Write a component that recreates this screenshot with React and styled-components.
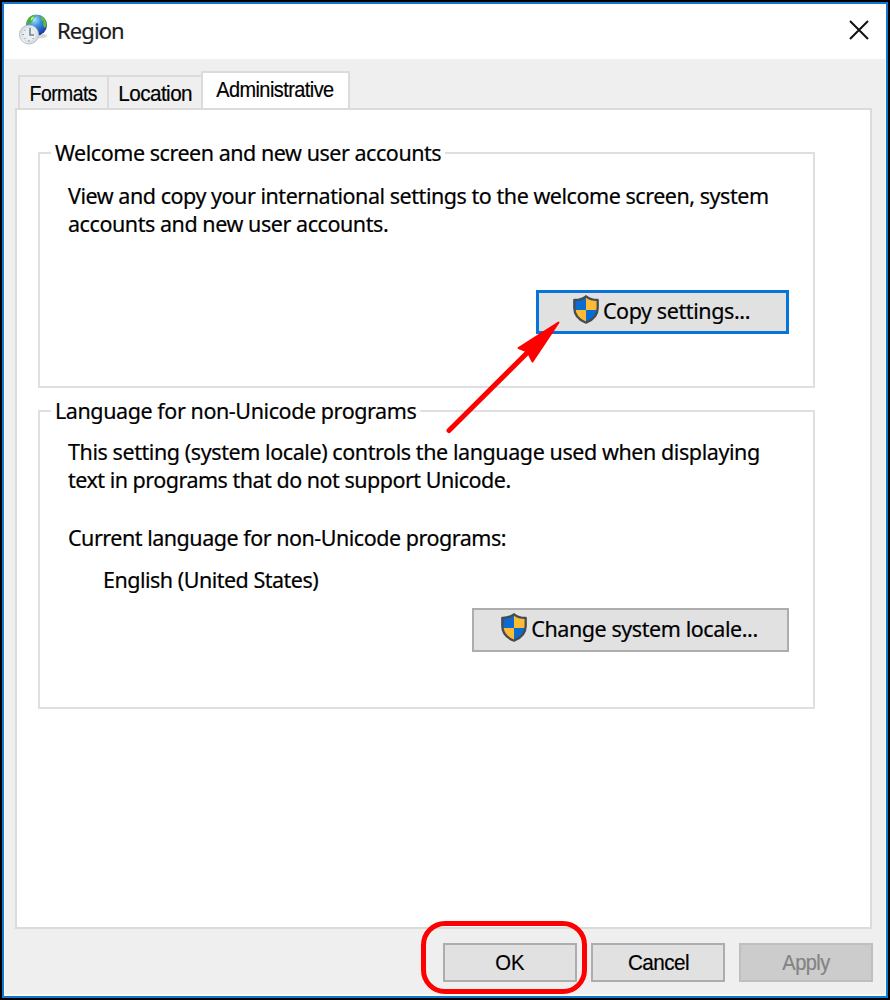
import styled, { createGlobalStyle } from 'styled-components';

const GlobalStyle = createGlobalStyle`
  * {
    box-sizing: border-box;
  }

  body {
    margin: 0;
    background: #000;
    overflow: hidden;
  }
`;

const Screen = styled.div`
  position: relative;
  width: 890px;
  height: 1000px;
  padding: 2px;
  background: #000;
  color: #000;
  font-family: 'Noto Sans', 'Open Sans', sans-serif;
  font-size: 21.5px;
`;

const Dialog = styled.div`
  display: flex;
  flex-direction: column;
  width: 100%;
  height: 100%;
  border: 2px solid #0f78d0;
  background: #efefef;
`;

const TitleBar = styled.header`
  display: flex;
  align-items: center;
  height: 55px;
  padding: 0 17px 4px 15px;
  background: #fff;
`;

const Title = styled.h1`
  flex: 1;
  margin: 0 0 0 9px;
  font-size: 22px;
  font-weight: 400;
  line-height: 30px;
  color: #1c1c1c;
`;

const CloseButton = styled.button`
  display: flex;
  padding: 0;
  border: 0;
  background: none;
`;

const Body = styled.main`
  display: flex;
  flex-direction: column;
  flex: 1;
  padding: 12px 0 0 10px;
  border: solid #fbfaf0;
  border-width: 0 1px 2px 1px;
`;

const TabList = styled.div`
  display: flex;
  align-items: flex-end;
  height: 39px;
  margin-bottom: -2px;
  padding-left: 3px;
`;

const Text = styled.span`
  display: inline-block;
  white-space: nowrap;
  letter-spacing: ${(props) => props.$tracking || 0}px;
  transform: scaleX(${(props) => props.$stretch || 1});
  -webkit-text-stroke: 0.2px currentColor;
`;

const Tab = styled.button`
  width: ${(props) => props.$width}px;
  height: ${(props) => (props.$active ? 39 : 35)}px;
  padding: ${(props) => (props.$active ? '0 2px 1px 0' : '2px 0 0')};
  margin-left: ${(props) => (props.$joined ? -2 : 0)}px;
  border: 2px solid #dbdbdb;
  border-bottom-color: ${(props) => (props.$active ? '#fff' : '#dbdbdb')};
  background: ${(props) => (props.$active ? '#fff' : '#efefef')};
  font-family: 'Liberation Sans', Arial, sans-serif;
  font-size: 22px;
  line-height: 26px;
  color: #000;
`;

const Panel = styled.section`
  display: flex;
  flex-direction: column;
  gap: 10px;
  width: 857px;
  height: 821px;
  padding: 30px 21px 0;
  border: 2px solid #dbdbdb;
  background: #fff;
`;

const Group = styled.fieldset`
  display: flex;
  flex-direction: column;
  width: 777px;
  height: ${(props) => props.$height}px;
  margin: 0;
  padding: ${(props) => props.$top}px 24px 0 28px;
  border: 2px solid #dfdfdf;
`;

const Legend = styled.legend`
  height: 26px;
  margin-left: -17px;
  padding: 0 4px;
  line-height: 26px;
`;

const Line = styled.div`
  height: 28px;
  line-height: 28px;
  margin-top: ${(props) => props.$gap || 0}px;
  padding-left: ${(props) => props.$indent || 0}px;
`;

const ActionButton = styled.button`
  display: flex;
  align-items: center;
  justify-content: center;
  align-self: flex-end;
  gap: 4px;
  width: ${(props) => props.$width}px;
  height: 44px;
  margin-top: ${(props) => props.$gap}px;
  padding: 0 2px 4px 0;
  border: ${(props) => (props.$focused ? '3px solid #0874d9' : '2px solid #adadad')};
  background: #e1e1e1;
  font: inherit;
  color: #000;

  svg {
    margin-bottom: 2px;
  }
`;

const Footer = styled.footer`
  display: flex;
  gap: 14px;
  justify-content: flex-end;
  padding: 14px 12px 0 0;
`;

const FooterButton = styled.button`
  width: 134px;
  height: 39px;
  padding: 0;
  border: 2px solid #adadad;
  background: #e1e1e1;
  font-family: 'Liberation Sans', Arial, sans-serif;
  font-size: 22px;
  color: #000;

  &:disabled {
    border-color: #bfbfbf;
    background: #cccccc;
    color: #838383;
  }
`;

const Highlight = styled.div`
  position: absolute;
  left: 421px;
  top: 921px;
  width: 166px;
  height: 73px;
  border: 5.5px solid #f00;
  border-radius: 24px;
`;

const Arrow = styled.svg`
  position: absolute;
  left: 440px;
  top: 312px;
`;

function RegionIcon() {
  return (
    <svg width="29" height="31" viewBox="0 0 29 31">
      <defs>
        <radialGradient id="ocean" cx="0.4" cy="0.25" r="0.8">
          <stop offset="0" stopColor="#a9e4fb" />
          <stop offset="0.4" stopColor="#3b8ee0" />
          <stop offset="1" stopColor="#142f9c" />
        </radialGradient>
        <linearGradient id="dial" x1="0" y1="0" x2="1" y2="1">
          <stop offset="0" stopColor="#cbd3d8" />
          <stop offset="0.5" stopColor="#f3f7f9" />
          <stop offset="1" stopColor="#c9d2d8" />
        </linearGradient>
      </defs>
      <ellipse cx="19" cy="22" rx="9" ry="2.5" fill="#c8c8c8" opacity="0.7" />
      <circle cx="17.5" cy="11" r="10.5" fill="url(#ocean)" />
      <path d="M7.5 10C8 5 11 1.5 15 1L17 2L14 5L13 8L10 10Z" fill="#4fae35" />
      <path d="M22 2C26 4 28 8 27.5 12L25.5 14L24 11L24.5 8L21.5 5Z" fill="#64bb32" />
      <path d="M12 4L15 2L14.5 4L12 7Z" fill="#c5ef8f" />
      <circle cx="10" cy="20.5" r="9.5" fill="url(#dial)" stroke="#b4bcc1" />
      <circle cx="10" cy="20.5" r="7.2" fill="#e9eff3" stroke="#d1d9de" />
      <path d="M11 14V21H15" fill="none" stroke="#6f8190" strokeWidth="1.5" />
      <path d="M10 26V27.5M3.5 20.5H5M5.5 16L6.5 17M5.5 25L6.5 24M14.5 25L13.5 24" stroke="#7d8c98" />
    </svg>
  );
}

function Shield() {
  return (
    <svg width="26" height="29" viewBox="0 0 26 29">
      <path d="M13 1.3C10 3.6 5.5 5 1.3 4.9V13C1.3 20 6 25 13 27.7C20 25 24.7 20 24.7 13V4.9C20.5 5 16 3.6 13 1.3Z" fill="#0a6bd0" />
      <path d="M13 1.3C16 3.6 20.5 5 24.7 4.9V15H13ZM1.6 15H13V27.7C6.5 25 2.5 21 1.6 15Z" fill="#fdbb35" />
      <path d="M13 1.3C10 3.6 5.5 5 1.3 4.9V13C1.3 20 6 25 13 27.7C20 25 24.7 20 24.7 13V4.9C20.5 5 16 3.6 13 1.3Z" fill="none" stroke="#454b50" strokeWidth="2.3" strokeLinejoin="round" />
    </svg>
  );
}

export default function App() {
  return (
    <Screen>
      <GlobalStyle />
      <Dialog>
        <TitleBar>
          <RegionIcon />
          <Title>
            <Text $tracking={-0.9}>Region</Text>
          </Title>
          <CloseButton aria-label="Close">
            <svg width="20" height="20" viewBox="0 0 20 20">
              <path d="M1 1L19 19M19 1L1 19" stroke="#111" strokeWidth="2" />
            </svg>
          </CloseButton>
        </TitleBar>
        <Body>
          <TabList>
            <Tab $width={91}>
              <Text $tracking={-0.6} $stretch={0.88}>Formats</Text>
            </Tab>
            <Tab $width={96} $joined>
              <Text $tracking={-0.6} $stretch={0.94}>Location</Text>
            </Tab>
            <Tab $width={149} $active $joined>
              <Text $tracking={-0.6} $stretch={0.905}>Administrative</Text>
            </Tab>
          </TabList>
          <Panel>
            <Group $height={248} $top={16}>
              <Legend>
                <Text $tracking={-0.46}>Welcome screen and new user accounts</Text>
              </Legend>
              <Line>
                <Text $tracking={-0.46}>View and copy your international settings to the welcome screen, system</Text>
              </Line>
              <Line>
                <Text $tracking={-0.44}>accounts and new user accounts.</Text>
              </Line>
              <ActionButton $width={253} $gap={52} $focused>
                <Shield />
                <Text $tracking={-0.4}>Copy settings...</Text>
              </ActionButton>
            </Group>
            <Group $height={311} $top={14}>
              <Legend>
                <Text $tracking={-0.42}>Language for non-Unicode programs</Text>
              </Legend>
              <Line>
                <Text $tracking={-0.42}>This setting (system locale) controls the language used when displaying</Text>
              </Line>
              <Line>
                <Text $tracking={-0.5}>text in programs that do not support Unicode.</Text>
              </Line>
              <Line $gap={30}>
                <Text $tracking={-0.48}>Current language for non-Unicode programs:</Text>
              </Line>
              <Line $gap={14} $indent={35}>
                <Text $tracking={-0.5}>English (United States)</Text>
              </Line>
              <ActionButton $width={317} $gap={14}>
                <Shield />
                <Text $tracking={-0.42}>Change system locale...</Text>
              </ActionButton>
            </Group>
          </Panel>
          <Footer>
            <FooterButton>
              <Text $stretch={0.92}>OK</Text>
            </FooterButton>
            <FooterButton>
              <Text $tracking={-0.6} $stretch={0.94}>Cancel</Text>
            </FooterButton>
            <FooterButton disabled>
              <Text $tracking={-0.6} $stretch={0.91}>Apply</Text>
            </FooterButton>
          </Footer>
        </Body>
      </Dialog>
      <Arrow width="124" height="124" viewBox="440 312 124 124">
        <path d="M449 430.5L530 350" stroke="#f00" strokeWidth="5" strokeLinecap="round" />
        <path d="M558.5 322.5L518.5 348L527.5 351.5L532.5 361.5Z" fill="#f00" stroke="#f00" strokeWidth="2" strokeLinejoin="round" />
      </Arrow>
      <Highlight />
    </Screen>
  );
}
